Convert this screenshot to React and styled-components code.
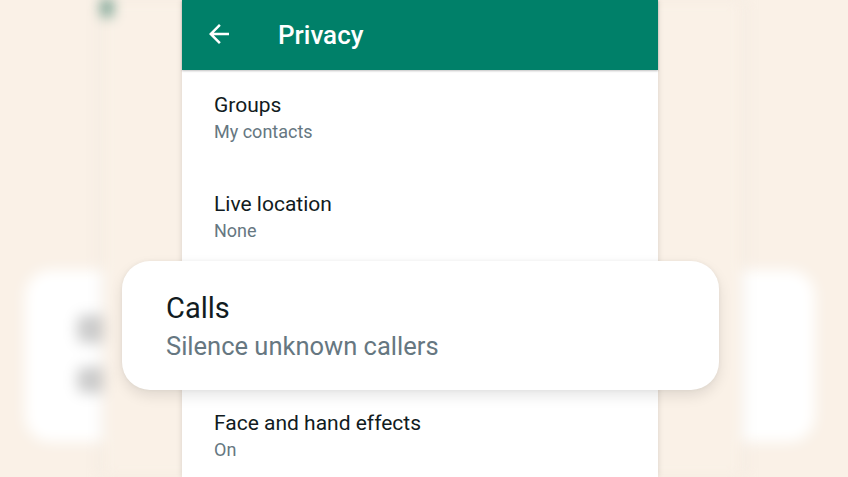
import React from "react";
import styled, { createGlobalStyle } from "styled-components";

const GlobalStyle = createGlobalStyle`
  html, body {
    margin: 0;
    padding: 0;
    background: #faf1e7;
    overflow: hidden;
  }
  body {
    font-family: Roboto, "Noto Sans", "Liberation Sans", sans-serif;
  }
`;

const Stage = styled.div`
  display: grid;
  width: 848px;
  height: 477px;
  overflow: hidden;
  background: #faf1e7;
`;

/* blurred copy of the screen far behind */
const Backdrop = styled.div`
  grid-area: 1 / 1;
  display: grid;
  filter: blur(7px);
`;

const BlurCard = styled.div`
  grid-area: 1 / 1;
  align-self: start;
  justify-self: start;
  margin: 270px 0 0 25px;
  width: 790px;
  height: 172px;
  background: #ffffff;
  border-radius: 26px;
  padding: 45px 0 0 52px;
  box-sizing: border-box;
  display: flex;
  flex-direction: column;
  gap: 24px;
`;

const BlurLine = styled.div`
  width: ${(p) => p.$w}px;
  height: ${(p) => p.$h}px;
  background: #cccccc;
  border-radius: 8px;
`;

const BlurPhone = styled.div`
  grid-area: 1 / 1;
  justify-self: start;
  margin-left: 103px;
  width: 639px;
  height: 477px;
  background: #faf1e7;
  box-shadow: 0 0 8px rgba(0, 0, 0, 0.1);
  display: flex;
  flex-direction: column;
`;

const BlurHeaderCap = styled.div`
  width: 8px;
  height: 16px;
  background: #1d6b57;
`;

const Foreground = styled.div`
  grid-area: 1 / 1;
  position: relative;
  z-index: 1;
  display: flex;
  justify-content: center;
`;

const Phone = styled.div`
  width: 476px;
  height: 477px;
  margin-left: -8px;
  background: #ffffff;
  box-shadow: 0 0 6px rgba(0, 0, 0, 0.14);
  display: flex;
  flex-direction: column;
`;

const Header = styled.header`
  height: 70px;
  flex: none;
  background: #008069;
  display: flex;
  align-items: center;
  padding: 0 0 0 22px;
  gap: 44px;
  box-shadow: 0 1px 2px rgba(0, 0, 0, 0.25);
  position: relative;
  z-index: 1;
`;

const BackButton = styled.div`
  width: 30px;
  height: 30px;
  display: flex;
  margin-bottom: 2px;
`;

const HeaderTitle = styled.h1`
  margin: 0 0 1px;
  font-size: 26px;
  font-weight: 500;
  color: #ffffff;
`;

const List = styled.div`
  display: flex;
  flex-direction: column;
`;

const Item = styled.div`
  height: 99px;
  box-sizing: border-box;
  padding: 21px 0 0 32px;
`;

const ItemTitle = styled.div`
  font-size: 21px;
  line-height: 28px;
  color: #111b21;
`;

const ItemSub = styled.div`
  margin-top: 1px;
  font-size: 18px;
  line-height: 24px;
  color: #667781;
`;

const Callout = styled.div`
  position: relative;
  z-index: 2;
  margin: -7px -61px -2px -60px;
  height: 129px;
  box-sizing: border-box;
  padding: 29px 0 0 44px;
  background: #ffffff;
  border-radius: 28px;
  box-shadow: 0 6px 14px rgba(0, 0, 0, 0.1), 0 0 4px rgba(0, 0, 0, 0.05);
`;

const CalloutTitle = styled.div`
  font-size: 29px;
  line-height: 36px;
  color: #111b21;
`;

const CalloutSub = styled.div`
  margin-top: 3px;
  font-size: 25.5px;
  line-height: 34px;
  color: #667781;
`;

const ArrowBack = () => (
  <svg width="30" height="30" viewBox="0 0 24 24">
    <path
      d="M20 11H7.83l5.59-5.59L12 4l-8 8 8 8 1.41-1.41L7.83 13H20v-2z"
      fill="#ffffff"
    />
  </svg>
);

const items = [
  { title: "Groups", sub: "My contacts" },
  { title: "Live location", sub: "None" },
];

export default function App() {
  return (
    <>
      <GlobalStyle />
      <Stage>
        <Backdrop>
          <BlurCard>
            <BlurLine $w={32} $h={28} />
            <BlurLine $w={32} $h={26} />
          </BlurCard>
          <BlurPhone>
            <BlurHeaderCap />
          </BlurPhone>
        </Backdrop>
        <Foreground>
          <Phone>
            <Header>
              <BackButton>
                <ArrowBack />
              </BackButton>
              <HeaderTitle>Privacy</HeaderTitle>
            </Header>
            <List>
              {items.map((it) => (
                <Item key={it.title}>
                  <ItemTitle>{it.title}</ItemTitle>
                  <ItemSub>{it.sub}</ItemSub>
                </Item>
              ))}
              <Callout>
                <CalloutTitle>Calls</CalloutTitle>
                <CalloutSub>Silence unknown callers</CalloutSub>
              </Callout>
              <Item>
                <ItemTitle>Face and hand effects</ItemTitle>
                <ItemSub>On</ItemSub>
              </Item>
            </List>
          </Phone>
        </Foreground>
      </Stage>
    </>
  );
}
